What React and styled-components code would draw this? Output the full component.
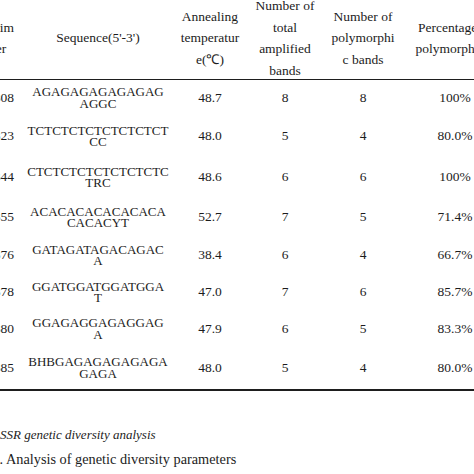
import React from "react";
import styled, { createGlobalStyle } from "styled-components";

const GlobalStyle = createGlobalStyle`
  html, body {
    margin: 0;
    padding: 0;
    background: #ffffff;
  }
  body {
    font-family: "Liberation Serif", "Times New Roman", serif;
    color: #1c1c1c;
  }
`;

const COLS = "62px 136px 88px 62px 94px 90px";

const Page = styled.div`
  width: 474px;
  height: 474px;
  overflow: hidden;
  background: #fff;
`;

const Table = styled.div`
  margin-left: -32px;
  margin-top: -5px;
  width: 532px;
`;

const HeaderRow = styled.div`
  display: grid;
  grid-template-columns: ${COLS};
  height: 84px;
  border-bottom: 1.5px solid #1e1e1e;
  font-size: 13.5px;
  line-height: 21.5px;
`;

const HeaderCell = styled.div`
  display: flex;
  align-items: center;
  justify-content: center;
  text-align: center;
  white-space: nowrap;
  padding-left: ${(p) => p.$shift || 0}px;
`;

const Body = styled.div`
  border-bottom: 2px solid #1e1e1e;
`;

const Row = styled.div`
  display: grid;
  grid-template-columns: ${COLS};
  height: ${(p) => p.$h}px;
  font-size: 13.5px;
`;

const Cell = styled.div`
  display: flex;
  align-items: center;
  justify-content: ${(p) => (p.$end ? "flex-end" : "center")};
  padding-right: ${(p) => (p.$end ? 16 : 0)}px;
  text-align: center;
  white-space: nowrap;
  padding-bottom: 2px;
`;

const Seq = styled.div`
  text-align: center;
  line-height: 11.5px;
  font-size: 13px;
  white-space: nowrap;
`;

const Captions = styled.div`
  padding-top: 36px;
  font-size: 13px;
`;

const SubHead = styled.div`
  font-style: italic;
  line-height: 16px;
`;

const Heading = styled.div`
  margin-top: 7px;
  margin-left: -29px;
  font-size: 14.3px;
  line-height: 18px;
  white-space: nowrap;
`;

const rows = [
  { id: "UBC808", seq: ["AGAGAGAGAGAGAG", "AGGC"], t: "48.7", total: 8, poly: 8, pct: "100%", h: 37 },
  { id: "UBC823", seq: ["TCTCTCTCTCTCTCTCT", "CC"], t: "48.0", total: 5, poly: 4, pct: "80.0%", h: 40 },
  { id: "UBC844", seq: ["CTCTCTCTCTCTCTCTC", "TRC"], t: "48.6", total: 6, poly: 6, pct: "100%", h: 42 },
  { id: "UBC855", seq: ["ACACACACACACACA", "CACACYT"], t: "52.7", total: 7, poly: 5, pct: "71.4%", h: 38 },
  { id: "UBC876", seq: ["GATAGATAGACAGAC", "A"], t: "38.4", total: 6, poly: 4, pct: "66.7%", h: 38 },
  { id: "UBC878", seq: ["GGATGGATGGATGGA", "T"], t: "47.0", total: 7, poly: 6, pct: "85.7%", h: 36 },
  { id: "UBC880", seq: ["GGAGAGGAGAGGAG", "A"], t: "47.9", total: 6, poly: 5, pct: "83.3%", h: 37 },
  { id: "UBC885", seq: ["BHBGAGAGAGAGAGA", "GAGA"], t: "48.0", total: 5, poly: 4, pct: "80.0%", h: 41 },
];

export default function App() {
  return (
    <Page>
      <GlobalStyle />
      <Table>
        <HeaderRow>
          <HeaderCell $shift={4}>
            Prim
            <br />
            er
          </HeaderCell>
          <HeaderCell>Sequence(5'-3')</HeaderCell>
          <HeaderCell>
            Annealing
            <br />
            temperatur
            <br />
            e(℃)
          </HeaderCell>
          <HeaderCell>
            Number of
            <br />
            total
            <br />
            amplified
            <br />
            bands
          </HeaderCell>
          <HeaderCell>
            Number of
            <br />
            polymorphi
            <br />
            c bands
          </HeaderCell>
          <HeaderCell>
            Percentage of
            <br />
            polymorphism
          </HeaderCell>
        </HeaderRow>
        <Body>
          {rows.map((r) => (
            <Row key={r.id} $h={r.h}>
              <Cell $end>{r.id}</Cell>
              <Cell>
                <Seq>
                  {r.seq[0]}
                  <br />
                  {r.seq[1]}
                </Seq>
              </Cell>
              <Cell>{r.t}</Cell>
              <Cell>{r.total}</Cell>
              <Cell>{r.poly}</Cell>
              <Cell>{r.pct}</Cell>
            </Row>
          ))}
        </Body>
      </Table>
      <Captions>
        <SubHead>SSR genetic diversity analysis</SubHead>
        <Heading>3.2.1. Analysis of genetic diversity parameters</Heading>
      </Captions>
    </Page>
  );
}
